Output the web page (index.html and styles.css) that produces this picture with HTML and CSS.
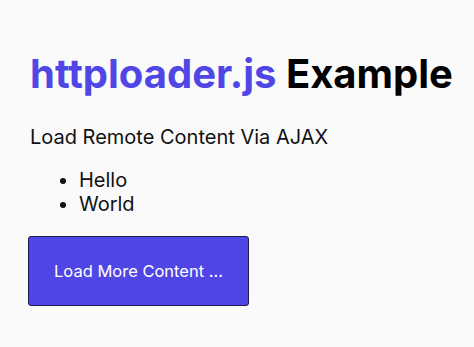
FILE: index.html
```html
<!DOCTYPE html>
<html>
<head>
<meta charset="utf-8">
<link rel="stylesheet" href="styles.css">
</head>
<body>
<main class="page">
  <h1 class="title"><span class="brand">httploader.js</span> Example</h1>
  <p class="lead">Load Remote Content Via AJAX</p>
  <ul class="list">
    <li>Hello</li>
    <li>World</li>
  </ul>
  <button class="btn">Load More Content ...</button>
</main>
</body>
</html>
```
FILE: styles.css
```css
html, body {
  margin: 0;
  padding: 0;
  background: #fafafa;
}
body {
  font-family: Inter, "Noto Sans", sans-serif;
  color: #111;
}
.page {
  padding: 48px 28px 0 30px;
}
.title {
  margin: 0;
  font-size: 40px;
  font-weight: 700;
  line-height: 52px;
  color: #000;
  white-space: nowrap;
}
.brand {
  color: #4f46e5;
}
.lead {
  margin: 24px 0 0;
  font-size: 20px;
  line-height: 26px;
}
.list {
  margin: 18px 0 0;
  padding-left: 49px;
  font-size: 20px;
  line-height: 24px;
}
.btn {
  margin: 20px 0 0 -2px;
  width: 221px;
  height: 70px;
  background: #4f46e5;
  color: #fff;
  border: 1px solid #1e1b4b;
  border-radius: 3px;
  font-family: Inter, "Noto Sans", sans-serif;
  font-size: 16.5px;
  padding: 0;
}
```
